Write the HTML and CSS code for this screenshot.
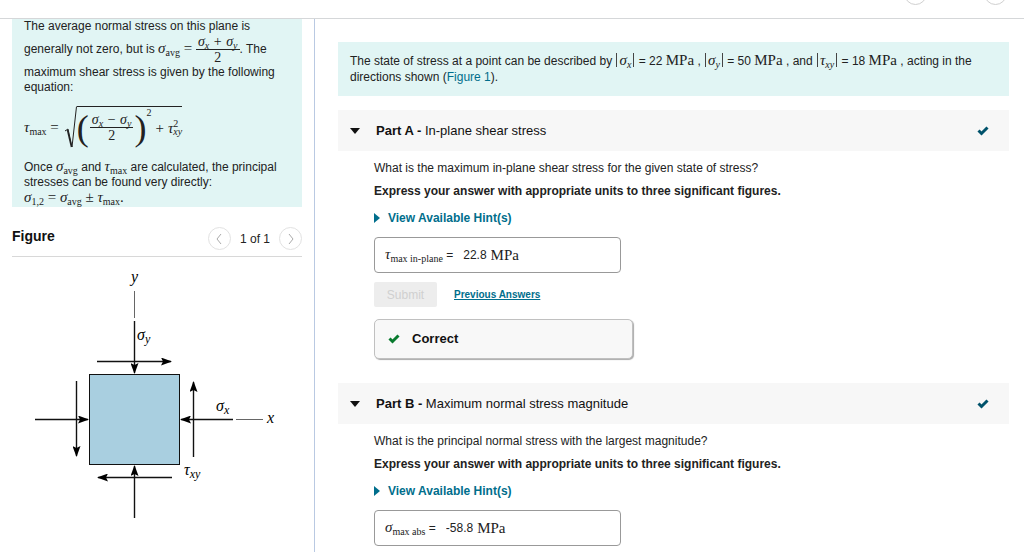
FILE: index.html
```html
<!DOCTYPE html>
<html lang="en">
<head>
    <meta charset="UTF-8">
    <title>Plane stress</title>
    <link rel="stylesheet" href="styles.css">
</head>
<body>
<header class="topbar">
    <button class="circle" type="button" aria-label="Previous item"></button>
    <button class="circle" type="button" aria-label="Next item"></button>
</header>
<div class="page">
    <aside class="sidebar">
        <div class="theory">
            <p>The average normal stress on this plane is<br>
                generally not zero, but is <span class="math"><i>σ</i><sub>avg</sub> = <span class="frac"><span class="num"><i>σ<sub>x</sub></i> <span class="op">+</span> <i>σ<sub>y</sub></i></span><span class="den">2</span></span></span>. The maximum shear stress is given by the following equation:</p>
            <div class="formula math">
                <span><i>τ</i><sub>max</sub> =</span>
                <svg class="radical" width="13" height="42" viewBox="0 0 13 42"><path d="M1 25l3-2 4 18 4.500-40.500" fill="none" stroke="#222"/><path d="M3.500 24l4 17" stroke="#222" stroke-width="1.500"/></svg>
                <span class="root">
                    <span class="paren">(</span>
                    <span class="frac"><span class="num"><i>σ<sub>x</sub></i> <span class="op">−</span> <i>σ<sub>y</sub></i></span><span class="den">2</span></span>
                    <span class="paren">)</span>
                    <span class="power">2</span>
                    <span class="plus">+</span>
                    <i>τ</i>
                    <span class="supsub"><span>2</span><i>xy</i></span>
                </span>
            </div>
            <p>Once <span class="math"><i>σ</i><sub>avg</sub></span> and <span class="math"><i>τ</i><sub>max</sub></span> are calculated, the principal stresses can be found very directly:<br>
                <span class="math"><i>σ</i><sub>1,2</sub> = <i>σ</i><sub>avg</sub> ± <i>τ</i><sub>max</sub>.</span></p>
        </div>
        <div class="figure_head">
            <h2>Figure</h2>
            <div class="pager">
                <button class="circle" type="button" aria-label="Previous figure"><svg width="8" height="12" viewBox="0 0 8 12"><path d="M6 1L2 6l4 5"/></svg></button>
                <span>1 of 1</span>
                <button class="circle" type="button" aria-label="Next figure"><svg width="8" height="12" viewBox="0 0 8 12"><path d="M2 1l4 5-4 5"/></svg></button>
            </div>
        </div>
        <svg class="figure" id="figure" viewBox="12 257 290 270" role="img" aria-label="Stress element">
            <defs>
                <marker id="arrow" markerUnits="userSpaceOnUse" markerWidth="11" markerHeight="8" refX="10" refY="4" orient="auto"><path d="M0 0l11 4-11 4 2-4z"/></marker>
            </defs>
            <rect x="89.500" y="374.500" width="90" height="90" fill="#a9cfe0" stroke="#111"/>
            <g class="axis">
                <path d="M134.500 291v27"/>
                <path d="M236 419.500h27"/>
            </g>
            <g class="arrows">
                <path d="M134.500 321v52"/>
                <path d="M97 361.500h74"/>
                <path d="M76.500 381v75"/>
                <path d="M35 419.500h53"/>
                <path d="M193.500 457v-75"/>
                <path d="M233 419.500h-52"/>
                <path d="M134.500 518v-52"/>
                <path d="M172 477.500h-74"/>
            </g>
            <text x="131" y="282">y</text>
            <text x="267" y="423">x</text>
            <text x="137" y="340">σ<tspan class="small" dy="3">y</tspan></text>
            <text x="216" y="411">σ<tspan class="small" dy="3">x</tspan></text>
            <text x="184" y="475">τ<tspan class="small" dy="3">xy</tspan></text>
        </svg>
    </aside>
    <main class="content">
        <div class="problem">The state of stress at a point can be described by <span class="math abs"><i>σ<sub>x</sub></i></span> = 22 <span class="math">MPa</span> , <span class="math abs"><i>σ<sub>y</sub></i></span> = 50 <span class="math">MPa</span> , and <span class="math abs"><i>τ<sub>xy</sub></i></span> = 18 <span class="math">MPa</span> , acting in the directions shown (<a href="#figure">Figure 1</a>).</div>

        <section class="part">
            <h3 class="part_head">
                <svg width="10" height="6" viewBox="0 0 10 6"><path d="M0 0h10L5 6z" fill="#111"/></svg>
                <span><b>Part A -</b> In-plane shear stress</span>
                <svg class="done" width="12" height="10" viewBox="0 0 12 10"><path d="M1.500 4.500l3 3 6-6" fill="none" stroke="#00526b" stroke-width="3"/></svg>
            </h3>
            <div class="part_body">
                <p>What is the maximum in-plane shear stress for the given state of stress?</p>
                <p><b>Express your answer with appropriate units to three significant figures.</b></p>
                <a class="hints" href="#hints-a"><svg width="6" height="10" viewBox="0 0 6 10"><path d="M0 0l6 5-6 5z" fill="#006e8c"/></svg>View Available Hint(s)</a>
                <div class="answer">
                    <label for="value_a"><span class="math"><i>τ</i><sub>max in-plane</sub></span> =</label>
                    <input class="value" id="value_a" type="text" value="22.8" readonly>
                    <input class="unit" type="text" value="MPa" aria-label="Units" readonly>
                </div>
                <div class="actions">
                    <button class="submit" type="button" disabled>Submit</button>
                    <a href="#previous">Previous Answers</a>
                </div>
                <div class="result"><svg width="12" height="10" viewBox="0 0 12 10"><path d="M1.500 4.500l3 3 6-6" fill="none" stroke="#087a2e" stroke-width="3"/></svg>Correct</div>
            </div>
        </section>

        <section class="part">
            <h3 class="part_head">
                <svg width="10" height="6" viewBox="0 0 10 6"><path d="M0 0h10L5 6z" fill="#111"/></svg>
                <span><b>Part B -</b> Maximum normal stress magnitude</span>
                <svg class="done" width="12" height="10" viewBox="0 0 12 10"><path d="M1.500 4.500l3 3 6-6" fill="none" stroke="#00526b" stroke-width="3"/></svg>
            </h3>
            <div class="part_body">
                <p>What is the principal normal stress with the largest magnitude?</p>
                <p><b>Express your answer with appropriate units to three significant figures.</b></p>
                <a class="hints" href="#hints-b"><svg width="6" height="10" viewBox="0 0 6 10"><path d="M0 0l6 5-6 5z" fill="#006e8c"/></svg>View Available Hint(s)</a>
                <div class="answer">
                    <label for="value_b"><span class="math"><i>σ</i><sub>max abs</sub></span> =</label>
                    <input class="value" id="value_b" type="text" value="-58.8" readonly>
                    <input class="unit" type="text" value="MPa" aria-label="Units" readonly>
                </div>
            </div>
        </section>
    </main>
</div>
</body>
</html>
```
FILE: styles.css
```css
*{margin:0;padding:0;box-sizing:border-box;}
body{display:flex;flex-direction:column;height:100vh;overflow:hidden;background:#fff;color:#222;font:12px/16px "Liberation Sans",Arial,sans-serif;}
a{color:#006e8c;text-decoration:none;}
button,input{font:inherit;color:inherit;border:0;background:none;}
svg{display:block;flex:none;}

/* top bar */
.topbar{display:flex;justify-content:flex-end;align-items:flex-end;gap:57px;flex:none;height:19px;padding:0 17px 13px 0;border-bottom:1px solid #d5d7d9;overflow:hidden;}
.circle{display:flex;align-items:center;justify-content:center;flex:none;width:23px;height:23px;border:1px solid #d0d0d0;border-radius:50%;background:#fff;}
.page{display:flex;flex:1;min-height:0;}

/* math */
.math{font-family:"Liberation Serif",serif;font-size:15px;line-height:14px;}
.math sub{font-size:10px;line-height:0;vertical-align:-3px;}
.frac{display:inline-flex;flex-direction:column;align-items:center;vertical-align:middle;font-size:14px;line-height:15px;}
.num{padding:0 2px;border-bottom:1px solid #222;}
.op{margin:0 1px;}
.abs{display:inline-block;margin:0 1px;padding:0 2px;border:solid #444;border-width:0 1px;}

/* left column */
.sidebar{flex:0 0 315px;padding:0 12px;border-right:1px solid #b9c9e2;overflow:hidden;}
.theory{padding:0 12px 1px;background:#e1f5f4;line-height:15px;}
.formula{display:flex;align-items:center;margin:11px 0;}
.radical{margin-left:5px;}
.root{display:flex;align-items:center;height:42px;border-top:1px solid #222;}
.paren{font-size:36px;line-height:36px;}
.root .frac{margin:0 1px;}
.power{align-self:flex-start;font-size:10px;line-height:12px;}
.plus{padding:0 4px;}
.supsub{display:flex;flex-direction:column;font-size:10px;line-height:8px;}
.figure_head{display:flex;align-items:flex-start;justify-content:space-between;padding:20px 0 6px;border-bottom:1px solid #d8d8d8;}
h2{font-size:14px;line-height:18px;color:#111;}
.pager{display:flex;align-items:center;gap:9px;}
.pager .circle{border-color:#e2e2e2;}
.pager path{fill:none;stroke:#aaa;}
.figure{width:100%;font:italic 16px "Liberation Serif",serif;}
.figure .small{font-size:12px;}
.axis path{stroke:#666;}
.arrows path{fill:none;stroke:#111;stroke-width:1.4;marker-end:url(#arrow);}

/* right column */
.content{flex:1;min-width:0;padding:23px 15px 0 23px;overflow:hidden;}
.problem{padding:11px 12px;background:#e1f5f4;}
.part{margin-top:14px;}
.part + .part{margin-top:24px;}
.part_head{display:flex;align-items:center;gap:16px;height:41px;padding:0 20px 0 12px;background:#f7f7f7;font-size:13px;font-weight:normal;color:#111;}
.done{margin-left:auto;}
.part_body{padding:9px 0 0 36px;}
.part_body p{margin-bottom:7px;}
.hints{display:flex;align-items:center;gap:8px;margin-top:11px;font-weight:bold;}
.answer{display:flex;align-items:center;width:247px;max-width:100%;height:36px;margin-top:11px;padding:0 10px;border:1px solid #999;border-radius:4px;}
.answer label{margin-right:10px;}
.answer input{field-sizing:content;}
.answer .unit{margin-left:4px;font:15px "Liberation Serif",serif;}
.actions{display:flex;align-items:center;gap:17px;margin:9px 0 12px;}
.submit{width:63px;height:25px;border-radius:2px;background:#ededed;color:#d0d0d0;}
.actions a{font-size:10px;font-weight:bold;text-decoration:underline;}
.result{display:flex;align-items:center;gap:12px;width:259px;max-width:100%;height:40px;padding:0 13px;border:1px solid #c0c0c0;border-radius:5px;background:#f8f8f8;box-shadow:1px 1px 1px #aaa;font-size:13px;font-weight:bold;color:#111;}
```
